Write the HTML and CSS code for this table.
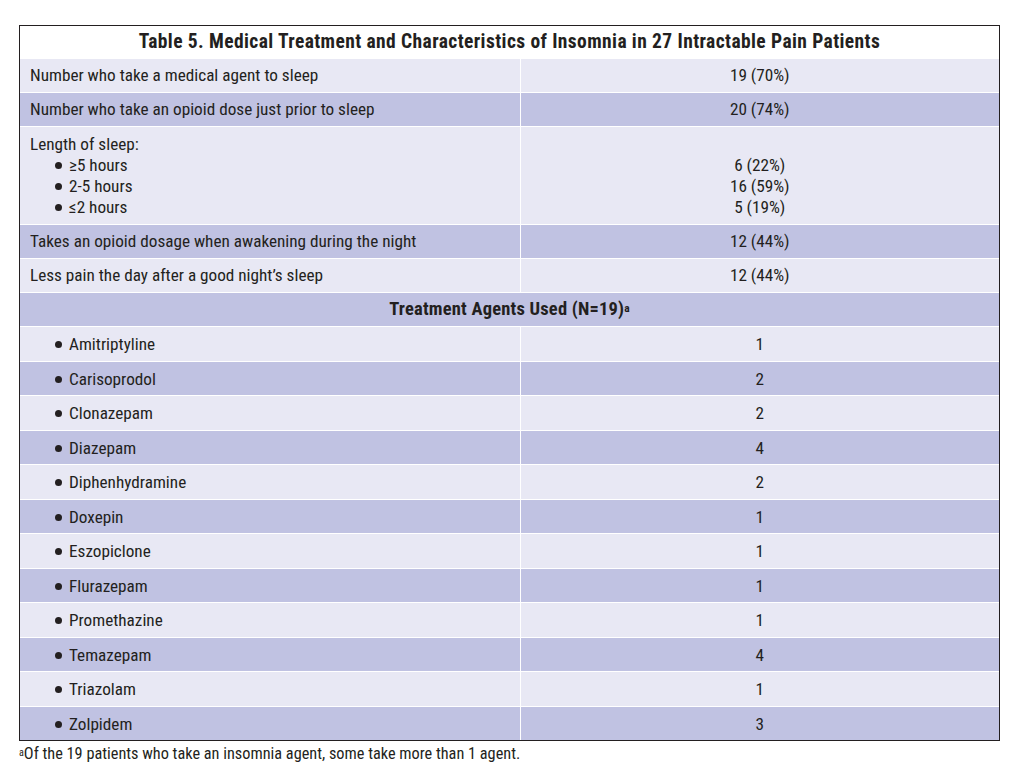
FILE: index.html
```html
<!DOCTYPE html>
<html>
<head>
<meta charset="utf-8">
<link rel="stylesheet" href="styles.css">
</head>
<body>
<div class="page">
  <div class="frame">
    <table class="tbl">
      <colgroup><col class="c1"><col class="c2"></colgroup>
      <tr><th colspan="2" class="title">Table 5. Medical Treatment and Characteristics of Insomnia in 27 Intractable Pain Patients</th></tr>
      <tr class="light"><td class="lab">Number who take a medical agent to sleep</td><td class="val">19 (70%)</td></tr>
      <tr class="dark"><td class="lab">Number who take an opioid dose just prior to sleep</td><td class="val">20 (74%)</td></tr>
      <tr class="light tall">
        <td class="lab">Length of sleep:
          <div class="item"><span class="dot"></span>≥5 hours</div>
          <div class="item"><span class="dot"></span>2-5 hours</div>
          <div class="item"><span class="dot"></span>≤2 hours</div>
        </td>
        <td class="val"><div>&nbsp;</div><div>6 (22%)</div><div>16 (59%)</div><div>5 (19%)</div></td>
      </tr>
      <tr class="dark"><td class="lab">Takes an opioid dosage when awakening during the night</td><td class="val">12 (44%)</td></tr>
      <tr class="light"><td class="lab">Less pain the day after a good night’s sleep</td><td class="val">12 (44%)</td></tr>
      <tr class="dark"><th colspan="2" class="sub">Treatment Agents Used (N=19)<sup>a</sup></th></tr>
      <tr class="light agent"><td class="lab"><div class="item"><span class="dot"></span>Amitriptyline</div></td><td class="val">1</td></tr>
      <tr class="dark agent"><td class="lab"><div class="item"><span class="dot"></span>Carisoprodol</div></td><td class="val">2</td></tr>
      <tr class="light agent"><td class="lab"><div class="item"><span class="dot"></span>Clonazepam</div></td><td class="val">2</td></tr>
      <tr class="dark agent"><td class="lab"><div class="item"><span class="dot"></span>Diazepam</div></td><td class="val">4</td></tr>
      <tr class="light agent"><td class="lab"><div class="item"><span class="dot"></span>Diphenhydramine</div></td><td class="val">2</td></tr>
      <tr class="dark agent"><td class="lab"><div class="item"><span class="dot"></span>Doxepin</div></td><td class="val">1</td></tr>
      <tr class="light agent"><td class="lab"><div class="item"><span class="dot"></span>Eszopiclone</div></td><td class="val">1</td></tr>
      <tr class="dark agent"><td class="lab"><div class="item"><span class="dot"></span>Flurazepam</div></td><td class="val">1</td></tr>
      <tr class="light agent"><td class="lab"><div class="item"><span class="dot"></span>Promethazine</div></td><td class="val">1</td></tr>
      <tr class="dark agent"><td class="lab"><div class="item"><span class="dot"></span>Temazepam</div></td><td class="val">4</td></tr>
      <tr class="light agent"><td class="lab"><div class="item"><span class="dot"></span>Triazolam</div></td><td class="val">1</td></tr>
      <tr class="dark agent"><td class="lab"><div class="item"><span class="dot"></span>Zolpidem</div></td><td class="val">3</td></tr>
    </table>
  </div>
  <p class="note"><sup>a</sup>Of the 19 patients who take an insomnia agent, some take more than 1 agent.</p>
</div>
</body>
</html>
```

FILE: styles.css
```css
html, body {
  margin: 0;
  padding: 0;
  background: #ffffff;
}
body {
  font-family: "Roboto Condensed", "Open Sans", "Liberation Sans", sans-serif;
  color: #231f20;
}
.page {
  padding: 25px 0 0 19px;
  width: 981px;
}
.frame {
  border: 1px solid #231f20;
  width: 979px;
}
.tbl {
  width: 100%;
  border-collapse: collapse;
  table-layout: fixed;
  font-size: 17.2px;
}
.c1 { width: 500px; }
.c2 { width: 479px; }
.tbl td, .tbl th {
  border: 1px solid #ffffff;
  padding: 6px 10px;
  line-height: 21px;
  vertical-align: middle;
}
.tbl .agent td {
  line-height: 21.5px;
  padding-top: 7px;
  padding-bottom: 5px;
}
.tbl tr:first-child th { border-top: 0; }
.tbl tr:last-child td { border-bottom: 0; }
.tbl td:first-child, .tbl th:first-child { border-left: 0; }
.tbl td:last-child, .tbl th:last-child { border-right: 0; }
.tbl td.lab { text-align: left; }
.tbl td.val { text-align: center; }
.tbl th.title {
  background: #ffffff;
  font-weight: bold;
  font-size: 19.5px;
  letter-spacing: 0.4px;
  line-height: 20px;
  height: 20px;
  text-align: center;
}
.sub {
  font-weight: bold;
  font-size: 18.5px;
  letter-spacing: 0.2px;
  text-align: center;
}
.sub sup, .note sup {
  font-size: 0.62em;
  vertical-align: top;
  position: relative;
  top: -1px;
}
.light { background: #e8e8f4; }
.dark { background: #c0c2e2; }
.tbl .tall td { padding-top: 7px; padding-bottom: 6px; vertical-align: top; }
.item {
  display: flex;
  align-items: center;
  padding-left: 25px;
}
.dot {
  width: 7px;
  height: 7px;
  border-radius: 50%;
  background: #231f20;
  margin-right: 7px;
  flex: none;
}
.note {
  margin: 3px 0 0 0;
  font-size: 16.3px;
  line-height: 20px;
}
```
